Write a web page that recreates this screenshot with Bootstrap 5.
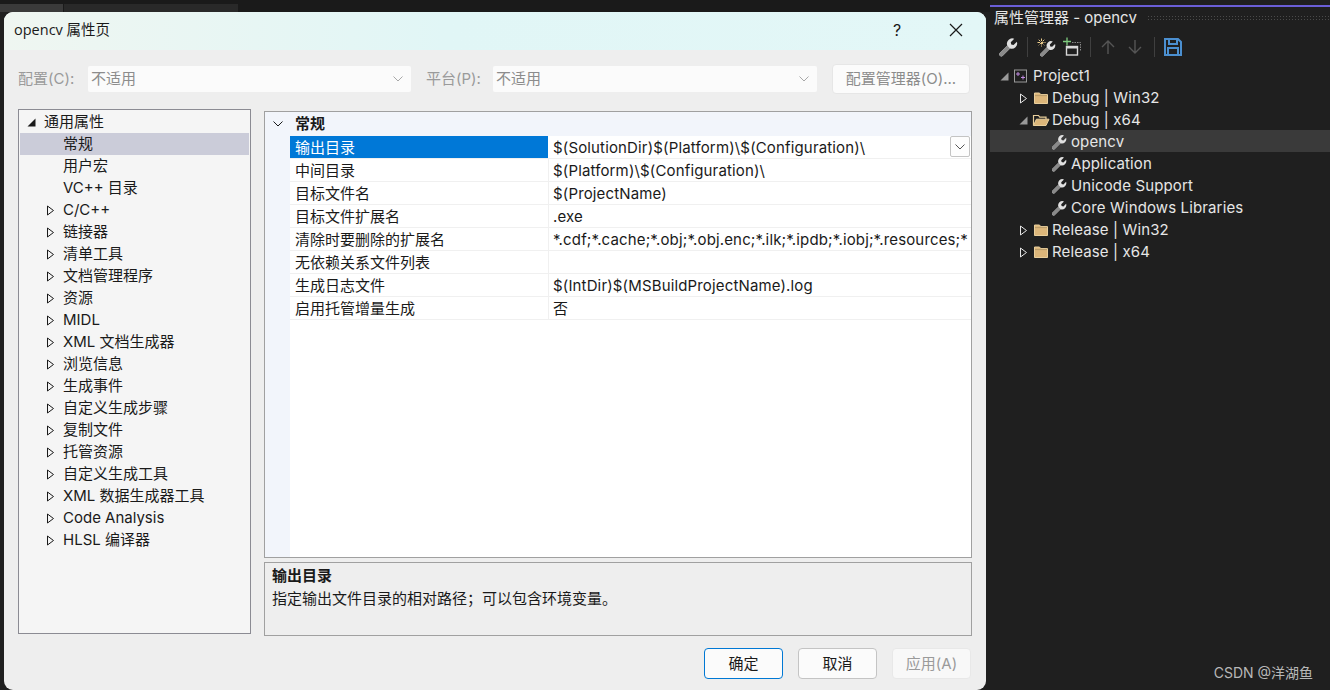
<!DOCTYPE html>
<html lang="zh-CN">
<head>
<meta charset="utf-8">
<title>opencv 属性页</title>
<link href="https://cdn.jsdelivr.net/npm/bootstrap@5.3.0/dist/css/bootstrap.min.css" rel="stylesheet">
<style>
html,body{height:690px;overflow:hidden;}
body{background:#1f1f1f;font-family:"Inter","Noto Sans CJK SC",sans-serif;font-size:15px;line-height:22px;color:#1a1a1a;}
.stage{width:1330px;height:690px;}
.left-pane{width:990px;flex:none;}
.bg-strip{height:12px;background:#1a1a1a;padding-top:4px;gap:1px;}
.bg-tab{height:8px;}
.bg-tab-a{width:63px;background:#3a3a3a;}
.bg-tab-b{width:174px;background:#292929;}
.dlg{width:982px;height:678px;margin-left:4px;background:#eee;border-radius:9px;overflow:hidden;}
.dlg-title{height:38px;background:linear-gradient(90deg,#eff6f1,#e1f6f6 45%,#e3f7f7);padding:0 23px 3px 10px;}
.dlg-title-text{font-family:"Open Sans","Noto Sans CJK SC",sans-serif;font-size:14.5px;}
.win-help{width:20px;margin-right:42px;text-align:center;font-size:16px;}
.cfg-row{height:44px;margin-top:16px;padding-left:14px;}
.cfg-label{color:#9a9a9a;line-height:26px;}
.lab-a{width:70px;}
.lab-b{width:67px;margin-left:15px;}
.fake-select{height:26px;background:#fbfbfb;color:#8c8c8c;padding:0 3px;border-radius:2px;}
.sel-a{width:323px;}
.sel-b{width:324px;}
.fake-select svg{color:#a8a8a8;}
.cfg-btn{width:138px;height:30px;margin-left:15px;margin-top:-2px;background:#fbfbfb;border:1px solid #e6e6e6;border-radius:4px;color:#8c8c8c;}
.work{height:528px;padding-left:14px;margin-top:-1px;}
.nav-tree{width:233px;height:525px;background:#f5f5f5;border:1px solid #8b8b93;padding:1px 1px;}
.nav-row{height:22px;white-space:nowrap;}
.nav-row.cur{background:#cbccd9;}
.tw{width:11px;height:11px;flex:none;}
.nav-l0{padding-left:6px;}
.nav-l0 .tw{margin-right:7px;}
.nav-l1{padding-left:25px;}
.nav-l1 .tw{margin-right:7px;}
.nav-l2{padding-left:43px;}
.right-col{width:708px;margin-left:13px;margin-top:2px;}
.grid-box{height:447px;background:#fff;border:1px solid #a0a0a0;}
.grid-head{height:24px;background:#f2f5fb;font-weight:700;}
.grid-head .chev{width:25px;flex:none;text-align:center;line-height:0;}
.grid-head .ghead{padding-left:5px;}
.grid-gut{width:25px;background:#f2f5fb;flex:none;}
.prop-list{min-width:0;}
.prop-row{height:23px;border-bottom:1px solid #f0f0f0;}
.prop-name{width:259px;flex:none;padding:1px 0 0 5px;border-right:1px solid #f0f0f0;line-height:21px;white-space:nowrap;}
.prop-val{flex:1;padding:1px 0 0 4px;white-space:nowrap;overflow:hidden;line-height:21px;min-width:0;letter-spacing:.15px;}
.prop-row.on .prop-name{background:#0078d7;color:#fff;border-right-color:#fff;}
.drop-mini{width:20px;height:21px;flex:none;border:1px solid #c4c4c4;border-radius:2px;background:#fdfdfd;margin-right:1px;color:#555;}
.desc-box{height:74px;margin-top:4px;border:1px solid #a0a0a0;padding:2px 7px;background:#eee;}
.desc-title{font-weight:700;}
.desc-text{margin-top:1px;}
.foot-row{margin-top:11px;padding-right:15px;gap:15px;}
.foot-btn{width:79px;height:31px;border-radius:4px;background:#fbfbfb;border:1px solid #c4c4c4;color:#1a1a1a;padding:0;font-size:15px;line-height:28px;}
.foot-btn.pri{border:1px solid #0078d4;}
.foot-btn.dim{background:#f8f8f8;border-color:#e8e8e8;color:#9a9a9a;}
.foot-btn:disabled{opacity:1;}
.right-pane{flex:1;min-width:0;color:#e6e6e6;}
.pane-accent{height:2px;background:#6a5ed6;margin-top:5px;}
.pane-title{height:21px;padding-left:4px;white-space:nowrap;}
.pane-grip{flex:1;height:6px;margin:0 0 0 10px;background-image:radial-gradient(#4a4a4a 35%,transparent 40%);background-size:3px 3px;}
.tbar{height:28px;margin-top:5px;padding-left:8px;}
.tb-ic{width:20px;height:20px;flex:none;}
.tb-sep{width:1px;height:20px;background:#3f3f3f;flex:none;margin:0 8px;}
.tb-sep-a{margin-left:9px;}
.tb-sep-b{margin-right:7px;}
.tb-sep-c{margin-left:9px;}
.tb-gap-a{margin-left:6px;}
.tb-gap-b{margin-left:7px;}
.tree{margin-top:3px;}
.t-row{height:22px;white-space:nowrap;padding-top:2px;letter-spacing:.13px;}
.t-row.hi{background:#3a3a3a;}
.t-l0{padding-left:9px;}
.t-l1{padding-left:28px;}
.t-l2{padding-left:60px;}
.t-l0 .tw{margin-right:3px;}
.t-l1 .tw{margin-right:3px;}
.t-row .tw.dim-tw{color:#9a9a9a;}
.pi{width:18px;height:16px;flex:none;margin-right:2px;}
.wi{width:18px;height:16px;flex:none;margin-right:3px;}
.mark-csdn{color:#b8b8b8;font-size:14px;line-height:18px;padding:0 17px 8px 0;}
.tree-wrap{flex:1;}
</style>
</head>
<body>
<svg width="0" height="0" class="d-none" aria-hidden="true">
<defs>
<symbol id="wrench" viewBox="0 0 16 16"><path d="M1.6 12.6 7.4 6.8a4.3 4.3 0 0 1 1-4.5A4.4 4.4 0 0 1 13 1.4L10.2 4.2l.4 1.8 1.8.4L15.1 3.7a4.4 4.4 0 0 1-1.1 4.5 4.3 4.3 0 0 1-4.4 1L3.8 15a1.6 1.6 0 0 1-2.2-2.4z" fill="#e0e0e0"/><path d="M1.6 12.6 7.4 6.8l2.2 2.4L3.8 15a1.6 1.6 0 0 1-2.2-2.4z" fill="#8a8a8a"/></symbol>
<symbol id="folder" viewBox="0 0 16 16"><path d="M1.5 3h5l1.2 1.6h6.8v8.9h-13z" fill="#dcb67a" stroke="#e9cf9c" stroke-width="1"/><path d="M2 5.6h12" stroke="#b79a68" stroke-width="1"/></symbol>
<symbol id="folderopen" viewBox="0 0 18 16"><path d="M1.5 13.5v-10h5l1.2 1.6h6.3v2.2" fill="none" stroke="#e9cf9c" stroke-width="1.2"/><path d="M1.5 13.5 4.4 7.2h12.6l-3 6.3z" fill="#dcb67a" stroke="#e9cf9c" stroke-width="1"/></symbol>
<symbol id="tri-open" viewBox="0 0 11 11"><path d="M1.5 9.5h8V1.5z" fill="currentColor"/></symbol>
<symbol id="tri-shut" viewBox="0 0 11 11"><path d="M2.5 1 8.500 5.500l-6 4.500z" fill="none" stroke="currentColor" stroke-width="1"/></symbol>
<symbol id="chev" viewBox="0 0 12 8"><path d="M1.5 1.5 6 6l4.5-4.5" fill="none" stroke="currentColor" stroke-width="1"/></symbol>
</defs>
</svg>

<div class="stage d-flex">
  <div class="left-pane">
    <div class="bg-strip d-flex">
      <div class="bg-tab bg-tab-a"></div>
      <div class="bg-tab bg-tab-b"></div>
    </div>
    <div class="dlg d-flex flex-column">
      <div class="dlg-title d-flex align-items-center">
        <span class="dlg-title-text flex-grow-1">opencv 属性页</span>
        <span class="win-help">?</span>
        <svg width="14" height="14" viewBox="0 0 14 14"><path d="M1 1l12 12M13 1 1 13" stroke="#1a1a1a" stroke-width="1.2" fill="none"/></svg>
      </div>
      <div class="cfg-row d-flex">
        <span class="cfg-label lab-a">配置(C):</span>
        <div class="fake-select sel-a d-flex align-items-center justify-content-between"><span>不适用</span><svg width="12" height="8" class="me-1"><use href="#chev"/></svg></div>
        <span class="cfg-label lab-b">平台(P):</span>
        <div class="fake-select sel-b d-flex align-items-center justify-content-between"><span>不适用</span><svg width="12" height="8" class="me-1"><use href="#chev"/></svg></div>
        <div class="cfg-btn d-flex align-items-center justify-content-center">配置管理器(O)...</div>
      </div>
      <div class="work d-flex">
        <div class="nav-tree">
          <div class="nav-row nav-l0 d-flex align-items-center"><svg class="tw"><use href="#tri-open"/></svg>通用属性</div>
          <div class="nav-row nav-l2 cur d-flex align-items-center">常规</div>
          <div class="nav-row nav-l2 d-flex align-items-center">用户宏</div>
          <div class="nav-row nav-l2 d-flex align-items-center">VC++ 目录</div>
          <div class="nav-row nav-l1 d-flex align-items-center"><svg class="tw"><use href="#tri-shut"/></svg>C/C++</div>
          <div class="nav-row nav-l1 d-flex align-items-center"><svg class="tw"><use href="#tri-shut"/></svg>链接器</div>
          <div class="nav-row nav-l1 d-flex align-items-center"><svg class="tw"><use href="#tri-shut"/></svg>清单工具</div>
          <div class="nav-row nav-l1 d-flex align-items-center"><svg class="tw"><use href="#tri-shut"/></svg>文档管理程序</div>
          <div class="nav-row nav-l1 d-flex align-items-center"><svg class="tw"><use href="#tri-shut"/></svg>资源</div>
          <div class="nav-row nav-l1 d-flex align-items-center"><svg class="tw"><use href="#tri-shut"/></svg>MIDL</div>
          <div class="nav-row nav-l1 d-flex align-items-center"><svg class="tw"><use href="#tri-shut"/></svg>XML 文档生成器</div>
          <div class="nav-row nav-l1 d-flex align-items-center"><svg class="tw"><use href="#tri-shut"/></svg>浏览信息</div>
          <div class="nav-row nav-l1 d-flex align-items-center"><svg class="tw"><use href="#tri-shut"/></svg>生成事件</div>
          <div class="nav-row nav-l1 d-flex align-items-center"><svg class="tw"><use href="#tri-shut"/></svg>自定义生成步骤</div>
          <div class="nav-row nav-l1 d-flex align-items-center"><svg class="tw"><use href="#tri-shut"/></svg>复制文件</div>
          <div class="nav-row nav-l1 d-flex align-items-center"><svg class="tw"><use href="#tri-shut"/></svg>托管资源</div>
          <div class="nav-row nav-l1 d-flex align-items-center"><svg class="tw"><use href="#tri-shut"/></svg>自定义生成工具</div>
          <div class="nav-row nav-l1 d-flex align-items-center"><svg class="tw"><use href="#tri-shut"/></svg>XML 数据生成器工具</div>
          <div class="nav-row nav-l1 d-flex align-items-center"><svg class="tw"><use href="#tri-shut"/></svg>Code Analysis</div>
          <div class="nav-row nav-l1 d-flex align-items-center"><svg class="tw"><use href="#tri-shut"/></svg>HLSL 编译器</div>
        </div>
        <div class="right-col">
          <div class="grid-box d-flex flex-column">
            <div class="grid-head d-flex align-items-center"><span class="chev"><svg width="12" height="8"><use href="#chev"/></svg></span><span class="ghead">常规</span></div>
            <div class="d-flex flex-grow-1">
              <div class="grid-gut"></div>
              <div class="flex-grow-1 prop-list">
                <div class="prop-row on d-flex"><div class="prop-name">输出目录</div><div class="prop-val">$(SolutionDir)$(Platform)\$(Configuration)\</div><div class="drop-mini d-flex align-items-center justify-content-center"><svg width="12" height="8"><use href="#chev"/></svg></div></div>
                <div class="prop-row d-flex"><div class="prop-name">中间目录</div><div class="prop-val">$(Platform)\$(Configuration)\</div></div>
                <div class="prop-row d-flex"><div class="prop-name">目标文件名</div><div class="prop-val">$(ProjectName)</div></div>
                <div class="prop-row d-flex"><div class="prop-name">目标文件扩展名</div><div class="prop-val">.exe</div></div>
                <div class="prop-row d-flex"><div class="prop-name">清除时要删除的扩展名</div><div class="prop-val">*.cdf;*.cache;*.obj;*.obj.enc;*.ilk;*.ipdb;*.iobj;*.resources;*</div></div>
                <div class="prop-row d-flex"><div class="prop-name">无依赖关系文件列表</div><div class="prop-val"></div></div>
                <div class="prop-row d-flex"><div class="prop-name">生成日志文件</div><div class="prop-val">$(IntDir)$(MSBuildProjectName).log</div></div>
                <div class="prop-row d-flex"><div class="prop-name">启用托管增量生成</div><div class="prop-val">否</div></div>
              </div>
            </div>
          </div>
          <div class="desc-box">
            <div class="desc-title">输出目录</div>
            <div class="desc-text">指定输出文件目录的相对路径；可以包含环境变量。</div>
          </div>
        </div>
      </div>
      <div class="foot-row d-flex justify-content-end">
        <button type="button" class="btn foot-btn pri">确定</button>
        <button type="button" class="btn foot-btn">取消</button>
        <button type="button" class="btn foot-btn dim" disabled>应用(A)</button>
      </div>
    </div>
  </div>
  <div class="right-pane d-flex flex-column">
    <div class="pane-accent"></div>
    <div class="pane-title d-flex align-items-center"><span>属性管理器 - opencv</span><span class="pane-grip"></span></div>
    <div class="tbar d-flex align-items-center">
      <svg class="tb-ic"><use href="#wrench"/></svg>
      <span class="tb-sep tb-sep-a"></span>
      <svg class="tb-ic" viewBox="0 0 20 20"><use href="#wrench" x="3" y="3" width="17" height="17"/><path d="M5.5 1.500v8M1.500 5.500h8M2.700 2.700l5.600 5.600M8.300 2.700 2.700 8.300" stroke="#e8c98a" stroke-width="1" stroke-dasharray="2.500 1"/></svg>
      <svg class="tb-ic tb-gap-a" viewBox="0 0 20 20"><path d="M5 .5v8M1 4.500h8" stroke="#7ecb7e" stroke-width="1.300"/><rect x="4.500" y="9.500" width="11" height="8.500" fill="none" stroke="#d8d8d8" stroke-width="1.400"/><rect x="4.500" y="9" width="11" height="2.500" fill="#d8d8d8"/><path d="M10 5.500h8.500v9" fill="none" stroke="#8a8a8a" stroke-dasharray="1.500 1"/></svg>
      <span class="tb-sep tb-sep-b"></span>
      <svg class="tb-ic" viewBox="0 0 20 20"><path d="M10 17V4M4 10l6-6 6 6" fill="none" stroke="#555" stroke-width="1.400"/></svg>
      <svg class="tb-ic tb-gap-b" viewBox="0 0 20 20"><path d="M10 3v13M4 10l6 6 6-6" fill="none" stroke="#555" stroke-width="1.400"/></svg>
      <span class="tb-sep tb-sep-c"></span>
      <svg class="tb-ic" viewBox="0 0 20 20"><path d="M2 2h13l3 3v13H2z" fill="none" stroke="#4b8fd0" stroke-width="2"/><path d="M6 2v5h8V2M5 18v-7h10v7" fill="none" stroke="#4b8fd0" stroke-width="2"/></svg>
    </div>
    <div class="tree tree-wrap">
      <div class="t-row t-l0 d-flex align-items-center"><svg class="tw dim-tw"><use href="#tri-open"/></svg><svg class="pi" viewBox="0 0 18 16"><rect x="1.500" y="2" width="12" height="12" fill="none" stroke="#9a9a9a"/><path d="M5 4v4M3 6h4M10 7.500v4M8 9.500h4" stroke="#c08ae0" stroke-width="1"/></svg>Project1</div>
      <div class="t-row t-l1 d-flex align-items-center"><svg class="tw"><use href="#tri-shut"/></svg><svg class="pi"><use href="#folder"/></svg>Debug | Win32</div>
      <div class="t-row t-l1 d-flex align-items-center"><svg class="tw dim-tw"><use href="#tri-open"/></svg><svg class="pi"><use href="#folderopen"/></svg>Debug | x64</div>
      <div class="t-row t-l2 hi d-flex align-items-center"><svg class="wi"><use href="#wrench"/></svg>opencv</div>
      <div class="t-row t-l2 d-flex align-items-center"><svg class="wi"><use href="#wrench"/></svg>Application</div>
      <div class="t-row t-l2 d-flex align-items-center"><svg class="wi"><use href="#wrench"/></svg>Unicode Support</div>
      <div class="t-row t-l2 d-flex align-items-center"><svg class="wi"><use href="#wrench"/></svg>Core Windows Libraries</div>
      <div class="t-row t-l1 d-flex align-items-center"><svg class="tw"><use href="#tri-shut"/></svg><svg class="pi"><use href="#folder"/></svg>Release | Win32</div>
      <div class="t-row t-l1 d-flex align-items-center"><svg class="tw"><use href="#tri-shut"/></svg><svg class="pi"><use href="#folder"/></svg>Release | x64</div>
    </div>
    <div class="mark-csdn text-end">CSDN @洋湖鱼</div>
  </div>
</div>
</body>
</html>
